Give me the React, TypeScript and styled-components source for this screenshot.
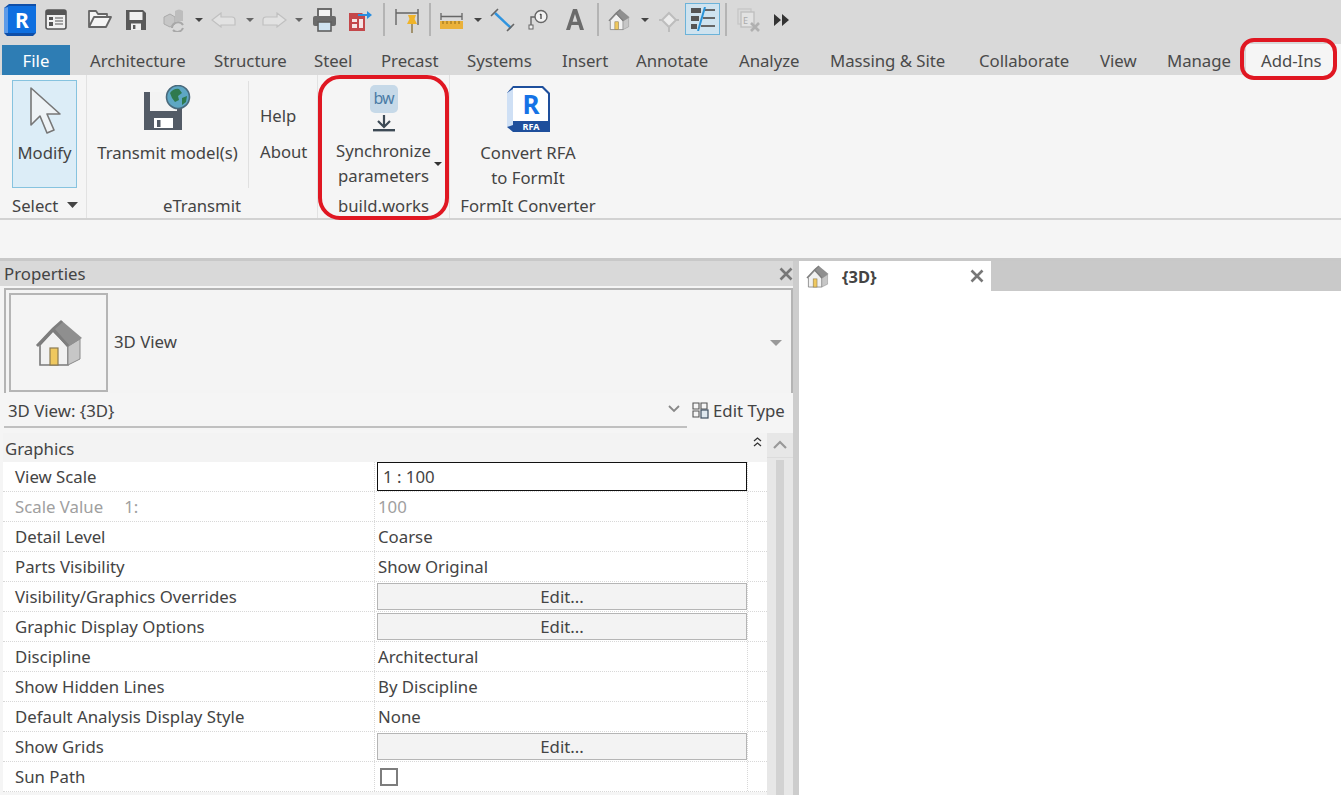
import React from "react";
import styled, { createGlobalStyle } from "styled-components";

const Global = createGlobalStyle`
  html, body { margin: 0; padding: 0; background: #fff; }
  body { width: 1341px; height: 795px; overflow: hidden; font-family: "Noto Sans", "Open Sans", sans-serif; color: #444; }
  * { box-sizing: border-box; }
`;

const Page = styled.div`
  position: relative; width: 1341px; height: 795px; display: flex; flex-direction: column; overflow: hidden;
`;
const Qat = styled.div`
  height: 44px; background: #d9d9d9; display: flex; align-items: flex-start; flex: none;
`;
const Slot = styled.div<{ $ml: number; $w: number; $top?: number }>`
  margin-left: ${p => p.$ml}px; margin-top: ${p => p.$top ?? 7}px; width: ${p => p.$w}px; flex: none; display: flex; justify-content: center;
  svg { display: block; }
`;
const Drop = styled.span<{ $ml: number }>`
  margin-left: ${p => p.$ml}px; margin-top: 18px; flex: none; width: 0; height: 0;
  border-left: 4px solid transparent; border-right: 4px solid transparent; border-top: 4px solid #444;
`;
const GreyDrop = styled(Drop)` border-top-color: #666; `;
const QatSep = styled.span<{ $ml: number }>`
  margin-left: ${p => p.$ml}px; margin-top: 3px; width: 2px; height: 33px; background: #b4b4b4; flex: none;
`;
const ActiveToggle = styled.div`
  margin-left: 6px; margin-top: 3px; width: 35px; height: 32px; flex: none; background: #cfe3ef; border: 1.5px solid #6cb3d9;
  display: flex; align-items: center; justify-content: center;
`;
const Tabs = styled.div`
  height: 31px; background: #d9d9d9; display: flex; align-items: stretch; padding-left: 2px; flex: none;
`;
const FileTab = styled.div`
  width: 68px; margin-top: 1px; margin-right: 20px; background: #2e7db4; color: #fff; font-size: 16.8px;
  display: flex; align-items: center; justify-content: center;
`;
const Tab = styled.div<{ $w: number; $active?: boolean }>`
  width: ${p => p.$w + (p.$active ? 15 : 0)}px; flex: none; font-size: 16.8px; letter-spacing: -0.05px; color: #4a4a4a; white-space: nowrap; display: flex; align-items: center;
  padding-top: 2px;
  margin-left: ${p => (p.$active ? -15 : 0)}px;
  padding-left: ${p => (p.$active ? 15 : 0)}px;
  background: ${p => (p.$active ? "#f5f5f5" : "transparent")};
`;
const Ribbon = styled.div`
  height: 145px; flex: none; background: #f5f5f5; border-bottom: 2px solid #d2d2d2; display: flex; position: relative;
`;
const Panel = styled.div<{ $w: number; $line?: boolean }>`
  width: ${p => p.$w}px; flex: none; display: flex; flex-direction: column; border-right: ${p => (p.$line ? "1px solid #e2e2e2" : "none")};
`;
const PanelBody = styled.div`
  height: 117px; display: flex; align-items: flex-start; flex: none;
`;
const PanelLabel = styled.div<{ $start?: boolean }>`
  flex: 1; font-size: 16.7px; color: #444; display: flex; align-items: center; justify-content: ${p => (p.$start ? "flex-start" : "center")};
  padding-left: ${p => (p.$start ? 12 : 0)}px; gap: 9px; white-space: nowrap;
`;
const ModifyButton = styled.div`
  margin: 5px 0 0 12px; width: 65px; height: 108px; background: #dcedf7; border: 1px solid #86c3df; display: flex; flex-direction: column; align-items: center; padding-top: 6px;
`;
const BigLabel = styled.div<{ $mt?: number }>`
  font-size: 16.7px; line-height: 25px; color: #444; text-align: center; white-space: nowrap; margin-top: ${p => p.$mt ?? 0}px;
`;
const BigButton = styled.div<{ $w: number }>`
  width: ${p => p.$w}px; flex: none; display: flex; flex-direction: column; align-items: center; padding-top: 10px; position: relative;
`;
const VSep = styled.div`
  width: 1px; height: 107px; margin-top: 6px; background: #e0e0e0; flex: none;
`;
const SmallCol = styled.div`
  display: flex; flex-direction: column; align-items: flex-start; gap: 11px; padding: 28px 0 0 11px;
`;
const TinyDrop = styled.span`
  position: absolute; left: 116px; top: 87px; width: 0; height: 0;
  border-left: 4px solid transparent; border-right: 4px solid transparent; border-top: 4px solid #333;
`;
const BwTile = styled.div`
  width: 28px; height: 28px; border-radius: 5px; background: #c6d9e8; color: #4b7ca6; font-size: 16px; line-height: 26px; text-align: center; letter-spacing: -1px;
`;
const Callout = styled.div<{ $l: number; $t: number; $w: number; $h: number; $r: number }>`
  position: absolute; left: ${p => p.$l}px; top: ${p => p.$t}px; width: ${p => p.$w}px; height: ${p => p.$h}px;
  border: 4.5px solid #e01722; border-radius: ${p => p.$r}px; pointer-events: none;
`;
const OptionsBar = styled.div`
  height: 38px; flex: none; background: #f5f5f5;
`;
const Divider = styled.div`
  height: 3px; flex: none; background: #c8c8c8;
`;
const Work = styled.div`
  flex: 1; display: flex; min-height: 0;
`;
const Props = styled.div`
  width: 793px; flex: none; display: flex; flex-direction: column; background: #f5f5f5;
`;
const Splitter = styled.div`
  width: 6px; flex: none; background: #cdcdcd;
`;
const PropsHead = styled.div`
  height: 25px; flex: none; background: #d9d9d9; display: flex; align-items: center; justify-content: space-between; padding: 0 0 0 4px; font-size: 16.8px; color: #444;
`;
const CloseGlyph = styled.svg`
  display: block; flex: none;
`;
const Selector = styled.div`
  height: 105px; flex: none; margin: 2px 0 0 4px; border: 2px solid #b4b4b4; border-bottom: none; display: flex; align-items: flex-start; padding: 3px 0 0 3px; background: #f4f4f4;
`;
const Thumb = styled.div`
  width: 99px; height: 99px; flex: none; border: 2px solid #b5b5b5; display: flex; align-items: center; justify-content: center;
`;
const SelectorName = styled.div`
  margin: 37px 0 0 6px; font-size: 16.8px; color: #444;
`;
const SelectorArrow = styled.span`
  margin: 47px 9px 0 auto; width: 0; height: 0; border-left: 6px solid transparent; border-right: 6px solid transparent; border-top: 6px solid #999;
`;
const TypeRow = styled.div`
  height: 40px; flex: none; display: flex; align-items: flex-start; font-size: 16.8px; color: #444;
`;
const TypeCombo = styled.div`
  margin-left: 4px; width: 683px; height: 35px; border-bottom: 2px solid #c0c0c0; display: flex; align-items: center; justify-content: space-between; padding: 2px 7px 0 4px;
`;
const ComboChevron = styled.svg`
  margin-bottom: 4px; flex: none;
`;
const EditType = styled.div`
  margin-left: 5px; height: 35px; display: flex; align-items: center; gap: 4px; white-space: nowrap;
`;
const GridWrap = styled.div`
  flex: 1; display: flex; min-height: 0; padding-left: 3px;
`;
const GridCol = styled.div`
  width: 764px; flex: none; display: flex; flex-direction: column;
`;
const GroupHead = styled.div`
  height: 29px; flex: none; background: #f3f3f3; display: flex; align-items: center; justify-content: space-between; padding: 1px 5px 0 2px; font-size: 16.8px; color: #444;
`;
const Collapse = styled.svg`
  margin-bottom: 13px; flex: none;
`;
const Row = styled.div`
  height: 30px; flex: none; display: flex; background: #fff; border-bottom: 1px dotted #d8d8d8;
`;
const Name = styled.div<{ $dim?: boolean }>`
  width: 372px; flex: none; padding-left: 12px; display: flex; align-items: center; gap: 21px; font-size: 16.8px; white-space: nowrap;
  color: ${p => (p.$dim ? "#a0a0a0" : "#444")}; border-right: 1px dotted #d8d8d8;
`;
const Value = styled.div<{ $dim?: boolean }>`
  width: 373px; flex: none; padding: 0 0 0 3px; display: flex; align-items: center; font-size: 16.8px;
  color: ${p => (p.$dim ? "#a0a0a0" : "#444")}; border-right: 1px dotted #d8d8d8;
`;
const ScaleInput = styled.div`
  width: 371px; height: 29px; margin: 0 0 0 -1px; border: 1.5px solid #111; background: #fff; padding-left: 5px; display: flex; align-items: center; color: #444;
`;
const EditBtn = styled.div`
  width: 370px; height: 27px; margin-left: -1px; margin-top: 0; background: #f3f3f3; border: 1px solid #b5b5b5; color: #444; display: flex; align-items: center; justify-content: center;
`;
const Check = styled.div`
  width: 18px; height: 18px; margin-left: 2px; border: 2px solid #7d7d7d; background: #fff;
`;
const Scrollbar = styled.div`
  width: 26px; flex: none; background: #e7e7e7; display: flex; flex-direction: column; align-items: center;
`;
const ScrollUp = styled.div`
  height: 25px; width: 100%; flex: none; border-bottom: 1px solid #dcdcdc; display: flex; align-items: center; justify-content: center;
`;
const ScrollThumb = styled.div`
  width: 8px; flex: 1; margin-top: 2px; background: #d2d2d2;
`;
const View = styled.div`
  flex: 1; background: #fff; display: flex; flex-direction: column;
`;
const ViewStrip = styled.div`
  height: 30px; flex: none; background: #c9c9c9; display: flex;
`;
const ViewTab = styled.div`
  width: 192px; background: #fff; display: flex; align-items: center; padding: 0 7px 0 7px;
`;
const ViewTitle = styled.div`
  margin-left: 13px; font-weight: 700; font-size: 16.5px; color: #444; flex: 1;
`;

const House = ({ s = 24 }: { s?: number }) => (
  <svg width={s} height={s} viewBox="0 0 48 48">
    <path d="M5 26 L18 12 L33 27 V46 H5Z" fill="#f1f1f1" stroke="#7a7a7a" strokeWidth="1.6" />
    <path d="M33 27 L45 20 V40 L33 46Z" fill="#c6c6c6" stroke="#8a8a8a" strokeWidth="1" />
    <path d="M18 9 L27 2 L47 19 L33 28Z" fill="#8f8f8f" />
    <path d="M2 27 L18 10 L27 2 M18 10 L33 27" fill="none" stroke="#7d7d7d" strokeWidth="2.8" />
    <rect x="15" y="29" width="8" height="17" fill="#efc85f" stroke="#8a7a50" strokeWidth="1.2" />
  </svg>
);

const X = ({ s = 14, c = "#777" }: { s?: number; c?: string }) => (
  <CloseGlyph width={s} height={s} viewBox="0 0 14 14">
    <path d="M1.5 1.5 L12.5 12.5 M12.5 1.5 L1.5 12.5" stroke={c} strokeWidth="2.6" />
  </CloseGlyph>
);

const tabs: [string, number][] = [
  ["Architecture", 124], ["Structure", 100], ["Steel", 67], ["Precast", 86], ["Systems", 95], ["Insert", 74], ["Annotate", 103],
  ["Analyze", 91], ["Massing & Site", 149], ["Collaborate", 121], ["View", 67], ["Manage", 94], ["Add-Ins", 80],
];

type Kind = "text" | "dim" | "input" | "edit" | "check";
const rows: { n: string; v?: string; k: Kind; extra?: string }[] = [
  { n: "View Scale", v: "1 : 100", k: "input" },
  { n: "Scale Value", extra: "1:", v: "100", k: "dim" },
  { n: "Detail Level", v: "Coarse", k: "text" },
  { n: "Parts Visibility", v: "Show Original", k: "text" },
  { n: "Visibility/Graphics Overrides", k: "edit" },
  { n: "Graphic Display Options", k: "edit" },
  { n: "Discipline", v: "Architectural", k: "text" },
  { n: "Show Hidden Lines", v: "By Discipline", k: "text" },
  { n: "Default Analysis Display Style", v: "None", k: "text" },
  { n: "Show Grids", k: "edit" },
  { n: "Sun Path", k: "check" },
];

export default function App() {
  return (
    <Page>
      <Global />
      <Qat>
        <Slot $ml={3} $w={34} $top={3}>
          <svg width="34" height="34" viewBox="0 0 34 34">
            <path d="M1 5 L6 1 H33 V30 L30 33 H4 L1 30Z" fill="#0f4fa8" />
            <path d="M1 5 L5 4 V30 L1 30Z" fill="#5d9be8" />
            <rect x="5" y="3" width="28" height="27" fill="#0e6fe0" rx="1" />
            <text x="19" y="25" fontFamily="Noto Sans, sans-serif" fontWeight="700" fontSize="21" fill="#fff" textAnchor="middle">R</text>
          </svg>
        </Slot>
        <Slot $ml={8} $w={22} $top={9}>
          <svg width="22" height="21" viewBox="0 0 22 21">
            <rect x="1" y="1" width="20" height="19" rx="2" fill="#f0f0f0" stroke="#555" strokeWidth="1.6" />
            <rect x="1" y="1" width="20" height="5" fill="#555" />
            <rect x="4" y="8" width="4" height="3" fill="#555" /><rect x="4" y="13" width="4" height="4" fill="#555" />
            <path d="M10 9 H18 M10 12 H18 M10 15 H18" stroke="#555" strokeWidth="1.2" />
          </svg>
        </Slot>
        <Slot $ml={21} $w={24} $top={9}>
          <svg width="24" height="20" viewBox="0 0 24 20">
            <path d="M1 18 V2 H8 L10 5 H19 V8 M1 18 L6 8 H23 L18 18Z" fill="#f4f4f4" stroke="#666" strokeWidth="1.8" strokeLinejoin="round" />
          </svg>
        </Slot>
        <Slot $ml={13} $w={22} $top={9}>
          <svg width="22" height="22" viewBox="0 0 22 22">
            <path d="M1 1 H18 L21 4 V21 H1Z" fill="#595959" />
            <rect x="4.5" y="3" width="13" height="8" fill="#efefef" />
            <rect x="6" y="14.5" width="10" height="6.5" fill="#efefef" /><rect x="8" y="16" width="2.4" height="4" fill="#595959" />
          </svg>
        </Slot>
        <Slot $ml={14} $w={24} $top={8}>
          <svg width="24" height="24" viewBox="0 0 24 24">
            <path d="M3 9 L9 6 L14 9 V16 L9 19 L3 16Z" fill="#c6c6c6" stroke="#aaa" />
            <path d="M14 3 Q18 0 22 3 V13 L14 13Z" fill="#bdbdbd" />
            <path d="M11 20 A6 6 0 0 1 22 17 M22 20 A6 6 0 0 1 12 22" stroke="#a8a8a8" strokeWidth="2" fill="none" />
          </svg>
        </Slot>
        <Drop $ml={10} />
        <Slot $ml={8} $w={25} $top={12}>
          <svg width="25" height="16" viewBox="0 0 25 16">
            <path d="M1 8 L10 1 V5 H21 Q24 5 24 8 V13 H10 V15Z" fill="#e2e2e2" stroke="#c0c0c0" strokeWidth="1.2" />
          </svg>
        </Slot>
        <GreyDrop $ml={10} />
        <Slot $ml={8} $w={25} $top={12}>
          <svg width="25" height="16" viewBox="0 0 25 16">
            <path d="M24 8 L15 1 V5 H4 Q1 5 1 8 V13 H15 V15Z" fill="#e2e2e2" stroke="#c0c0c0" strokeWidth="1.2" />
          </svg>
        </Slot>
        <GreyDrop $ml={8} />
        <Slot $ml={9} $w={25} $top={8}>
          <svg width="25" height="24" viewBox="0 0 25 24">
            <rect x="6" y="1" width="13" height="8" fill="#f2f2f2" stroke="#5f5f5f" strokeWidth="1.8" />
            <rect x="1" y="8" width="23" height="10" rx="2" fill="#6a6a6a" />
            <rect x="6" y="14" width="13" height="9" fill="#cfe3f1" stroke="#5f5f5f" strokeWidth="1.6" />
          </svg>
        </Slot>
        <Slot $ml={11} $w={24} $top={8}>
          <svg width="24" height="24" viewBox="0 0 24 24">
            <path d="M1 5 H14 L17 8 V23 H1Z" fill="#c4474a" />
            <rect x="4" y="11" width="5" height="3" fill="#f5e5e5" /><rect x="4" y="16" width="5" height="4" fill="#f5e5e5" /><rect x="11" y="11" width="4" height="9" fill="#f5e5e5" />
            <path d="M10 6 H19 V3 L24 7 L19 11 V8 H10Z" fill="#2a8ee0" />
          </svg>
        </Slot>
        <QatSep $ml={11} />
        <Slot $ml={10} $w={24} $top={9}>
          <svg width="24" height="24" viewBox="0 0 24 24">
            <path d="M1 0 V16 M23 0 V16 M1 4 H23" stroke="#666" strokeWidth="1.4" fill="none" />
            <path d="M13 6 H21 L19.5 10 L22 15 H12 L14.5 10Z" fill="#f0b429" /><path d="M17 15 V24" stroke="#8a7440" strokeWidth="1.4" />
          </svg>
        </Slot>
        <QatSep $ml={10} />
        <Slot $ml={9} $w={23} $top={13}>
          <svg width="23" height="16" viewBox="0 0 23 16">
            <path d="M1 0 V7 M22 0 V7 M1 3.5 H22" stroke="#666" strokeWidth="1.3" fill="none" />
            <rect x="0" y="8" width="23" height="8" fill="#eab13a" />
            <path d="M3 8 V11 M7 8 V11 M11 8 V11 M15 8 V11 M19 8 V11" stroke="#8f6b16" strokeWidth="1" />
          </svg>
        </Slot>
        <Drop $ml={11} />
        <Slot $ml={8} $w={25} $top={8}>
          <svg width="25" height="24" viewBox="0 0 25 24">
            <path d="M5 5 L21 20" stroke="#2f94df" strokeWidth="2.4" />
            <path d="M1 8 L8 1 M17 23 L24 16" stroke="#666" strokeWidth="1.6" />
          </svg>
        </Slot>
        <Slot $ml={13} $w={20} $top={9}>
          <svg width="20" height="21" viewBox="0 0 20 21">
            <circle cx="13" cy="7.5" r="6" fill="#f2f2f2" stroke="#666" strokeWidth="1.4" />
            <path d="M13 5 L12 6 M13 5 V10" stroke="#444" strokeWidth="1.3" fill="none" />
            <path d="M7 8 H3 V17" stroke="#666" strokeWidth="1.4" fill="none" />
            <rect x="1" y="16" width="4" height="4" fill="#efefef" stroke="#666" />
          </svg>
        </Slot>
        <Slot $ml={18} $w={18} $top={9}>
          <svg width="18" height="21" viewBox="0 0 18 21"><path d="M0 21 L7 0 H11 L18 21 H14 L12.5 16 H5.5 L4 21Z M6.6 12.8 H11.4 L9 5Z" fill="#6b6b6b" fillRule="evenodd" /></svg>
        </Slot>
        <QatSep $ml={13} />
        <Slot $ml={9} $w={22} $top={8}><House s={23} /></Slot>
        <Drop $ml={11} />
        <Slot $ml={10} $w={20} $top={10}>
          <svg width="20" height="22" viewBox="0 0 20 22">
            <path d="M0 10 L4 10 M16 10 L20 10 M10 16 V22" stroke="#bdbdbd" strokeWidth="2" />
            <path d="M10 3 L17 10 L10 17 L3 10Z" fill="#ececec" stroke="#bdbdbd" strokeWidth="2" />
          </svg>
        </Slot>
        <ActiveToggle>
          <svg width="26" height="24" viewBox="0 0 26 24">
            <rect x="1" y="1" width="10" height="5" fill="#555" /><rect x="1" y="9" width="8" height="5" fill="#555" /><rect x="1" y="17" width="6" height="5" fill="#555" />
            <path d="M15 3 H25 M13 11 H25 M11 19 H25" stroke="#666" strokeWidth="1.8" />
            <path d="M15 0 L8 24" stroke="#2a94d9" strokeWidth="2" />
          </svg>
        </ActiveToggle>
        <QatSep $ml={5} />
        <Slot $ml={10} $w={24} $top={8}>
          <svg width="24" height="24" viewBox="0 0 24 24">
            <rect x="1" y="1" width="13" height="15" fill="none" stroke="#c6c6c6" strokeWidth="1.3" />
            <rect x="4" y="4" width="13" height="15" fill="#e2e2e2" stroke="#bdbdbd" strokeWidth="1.3" />
            <text x="6" y="16" fontSize="9" fill="#aaa" fontFamily="Noto Sans, sans-serif">E</text>
            <path d="M14 15 L22 23 M22 15 L14 23" stroke="#b0b0b0" strokeWidth="2.6" />
          </svg>
        </Slot>
        <Slot $ml={13} $w={15} $top={14}>
          <svg width="15" height="12" viewBox="0 0 15 12"><path d="M0 0 L7 6 L0 12Z M8 0 L15 6 L8 12Z" fill="#333" /></svg>
        </Slot>
      </Qat>
      <Tabs>
        <FileTab>File</FileTab>
        {tabs.map(([t, w]) => (
          <Tab key={t} $w={w} $active={t === "Add-Ins"}>{t}</Tab>
        ))}
      </Tabs>
      <Ribbon>
        <Panel $w={87} $line>
          <PanelBody>
            <ModifyButton>
              <svg width="32" height="48" viewBox="0 0 32 48">
                <path d="M2 1 V38 L11 29 L18 46 L25 43 L18 27 L31 27Z" fill="#eef3f6" stroke="#777" strokeWidth="1.6" strokeLinejoin="round" />
              </svg>
              <BigLabel $mt={5}>Modify</BigLabel>
            </ModifyButton>
          </PanelBody>
          <PanelLabel $start>
            Select
            <svg width="11" height="6" viewBox="0 0 11 6"><path d="M0 0 H11 L5.5 6Z" fill="#444" /></svg>
          </PanelLabel>
        </Panel>
        <Panel $w={231} $line>
          <PanelBody>
            <BigButton $w={161}>
              <svg width="48" height="48" viewBox="0 0 48 48">
                <path d="M0 7 H30 L38 15 V45 H0Z" fill="#535b66" rx="2" />
                <rect x="6" y="7" width="27" height="19" fill="#f3f3f3" />
                <rect x="10" y="33" width="19" height="10" fill="#fff" /><rect x="13" y="35" width="3.5" height="7" fill="#535b66" />
                <circle cx="34" cy="12" r="11.5" fill="#5ea7c4" stroke="#4a6a7c" strokeWidth="1.6" />
                <path d="M26 8 Q30 3 35 4 L38 8 L34 11 L35 15 L31 17 L28 13Z M38 13 L43 11 L42 17 L38 20Z" fill="#2f7a4d" />
              </svg>
              <BigLabel $mt={7}>Transmit model(s)</BigLabel>
            </BigButton>
            <VSep />
            <SmallCol>
              <BigLabel>Help</BigLabel>
              <BigLabel>About</BigLabel>
            </SmallCol>
          </PanelBody>
          <PanelLabel>eTransmit</PanelLabel>
        </Panel>
        <Panel $w={132} $line>
          <PanelBody>
            <BigButton $w={131}>
              <BwTile>bw</BwTile>
              <svg width="22" height="20" viewBox="0 0 22 20">
                <path d="M11 2 V13 M5 8 L11 14 L17 8" fill="none" stroke="#3d4a55" strokeWidth="2.2" />
                <rect x="0" y="16" width="22" height="2.4" fill="#3d4a55" />
              </svg>
              <BigLabel $mt={5}>Synchronize</BigLabel>
              <BigLabel>parameters</BigLabel>
              <TinyDrop />
            </BigButton>
          </PanelBody>
          <PanelLabel>build.works</PanelLabel>
        </Panel>
        <Panel $w={156}>
          <PanelBody>
            <BigButton $w={156}>
              <svg width="46" height="48" viewBox="0 0 46 48">
                <path d="M2 8 L8 1 H38 L45 8 V47 H8 L2 42Z" fill="#1e4f9c" />
                <path d="M2 8 L8 4 V40 L2 42Z" fill="#cfe0f5" />
                <path d="M8 3 H37 L43 9 V36 H8Z" fill="#fff" />
                <text x="26" y="29" fontFamily="Noto Sans, sans-serif" fontWeight="700" fontSize="26" fill="#1673e6" textAnchor="middle">R</text>
                <text x="26" y="45" fontFamily="Noto Sans, sans-serif" fontWeight="700" fontSize="9" fill="#fff" textAnchor="middle">RFA</text>
              </svg>
              <BigLabel $mt={7}>Convert RFA</BigLabel>
              <BigLabel>to FormIt</BigLabel>
            </BigButton>
          </PanelBody>
          <PanelLabel>FormIt Converter</PanelLabel>
        </Panel>
        <Callout $l={318} $t={0} $w={131} $h={145} $r={22} />
      </Ribbon>
      <Callout $l={1240} $t={38} $w={97} $h={42} $r={14} />
      <OptionsBar />
      <Divider />
      <Work>
        <Props>
          <PropsHead>
            Properties
            <X />
          </PropsHead>
          <Selector>
            <Thumb><House s={48} /></Thumb>
            <SelectorName>3D View</SelectorName>
            <SelectorArrow />
          </Selector>
          <TypeRow>
            <TypeCombo>
              3D View: {"{3D}"}
              <ComboChevron width="12" height="8" viewBox="0 0 12 8"><path d="M1 1 L6 6 L11 1" fill="none" stroke="#888" strokeWidth="1.8" /></ComboChevron>
            </TypeCombo>
            <EditType>
              <svg width="17" height="17" viewBox="0 0 17 17">
                <path d="M1 1 H7 V7 H1Z M9 1 H15 V7 H9Z M1 9 H7 V15 H1Z" fill="none" stroke="#555" strokeWidth="1.1" />
                <rect x="9" y="8" width="7" height="8" fill="#dfe8ef" stroke="#3f4f60" strokeWidth="1.2" />
              </svg>
              Edit Type
            </EditType>
          </TypeRow>
          <GridWrap>
            <GridCol>
              <GroupHead>
                Graphics
                <Collapse width="9" height="10" viewBox="0 0 9 10"><path d="M1 4 L4.5 1 L8 4 M1 9 L4.5 6 L8 9" fill="none" stroke="#333" strokeWidth="1.3" /></Collapse>
              </GroupHead>
              {rows.map(r => (
                <Row key={r.n}>
                  <Name $dim={r.k === "dim"}>
                    <span>{r.n}</span>
                    {r.extra && <span>{r.extra}</span>}
                  </Name>
                  <Value $dim={r.k === "dim"}>
                    {r.k === "input" && <ScaleInput>{r.v}</ScaleInput>}
                    {(r.k === "text" || r.k === "dim") && r.v}
                    {r.k === "edit" && <EditBtn>Edit...</EditBtn>}
                    {r.k === "check" && <Check />}
                  </Value>
                </Row>
              ))}
            </GridCol>
            <Scrollbar>
              <ScrollUp>
                <svg width="16" height="10" viewBox="0 0 16 10"><path d="M2 8 L8 2 L14 8" fill="none" stroke="#999" strokeWidth="2.2" /></svg>
              </ScrollUp>
              <ScrollThumb />
            </Scrollbar>
          </GridWrap>
        </Props>
        <Splitter />
        <View>
          <ViewStrip>
            <ViewTab>
              <House s={23} />
              <ViewTitle>{"{3D}"}</ViewTitle>
              <X />
            </ViewTab>
          </ViewStrip>
        </View>
      </Work>
    </Page>
  );
}
